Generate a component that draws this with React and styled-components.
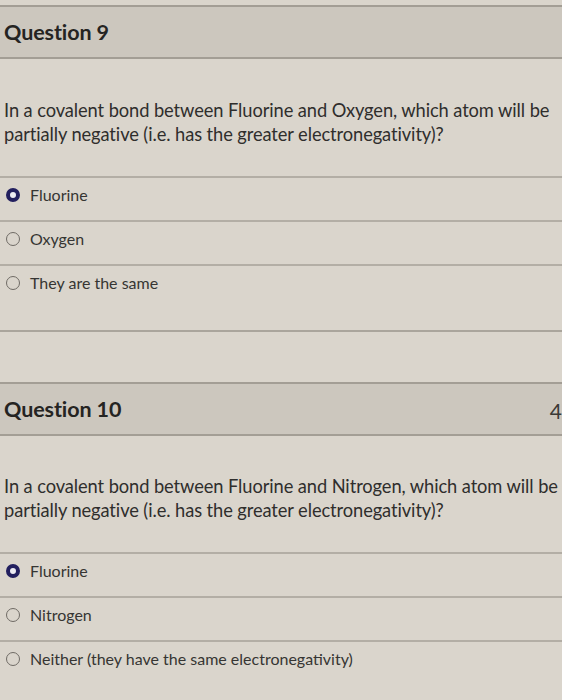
import React from "react";
import styled, { createGlobalStyle } from "styled-components";

const Global = createGlobalStyle`
  html, body {
    margin: 0;
    padding: 0;
    background: #dad5cc;
    overflow: hidden;
  }
  body {
    font-family: Lato, "Open Sans", "Liberation Sans", sans-serif;
    color: #2e2d2b;
  }
`;

const Page = styled.div`
  width: 562px;
  padding-top: 5px;
  display: flex;
  flex-direction: column;
  gap: 50px;
`;

const Question = styled.section`
  display: flex;
  flex-direction: column;
  border-bottom: 2px solid #aaa59c;
`;

const Header = styled.header`
  height: 50px;
  display: flex;
  align-items: center;
  justify-content: space-between;
  padding: 0 0 0 4px;
  background: #ccc7be;
  border-top: 2px solid #a39e95;
  border-bottom: 2px solid #a39e95;
`;

const Title = styled.h2`
  margin: 0;
  font-size: 21.5px;
  font-weight: 700;
  color: #252422;
  letter-spacing: -0.1px;
`;

const Points = styled.span`
  font-size: 21px;
  color: #3a3936;
  margin-top: 3px;
`;

const Text = styled.p`
  margin: 0;
  padding: ${(p) => p.$top}px 0 30px 4px;
  font-size: 18.3px;
  letter-spacing: -0.09px;
  line-height: 24px;
  color: #2f2e2c;
`;

const Answers = styled.ul`
  list-style: none;
  margin: 0;
  padding: 0 0 22px 0;
  display: flex;
  flex-direction: column;
`;

const Answer = styled.li`
  display: flex;
  align-items: center;
  gap: 10px;
  padding: 8px 0 16px 6px;
  line-height: 18px;
  font-size: 16px;
  color: #363533;
  border-top: 2px solid #b3aea5;
`;

const Radio = styled.span`
  box-sizing: border-box;
  flex: none;
  width: 14px;
  height: 14px;
  border-radius: 50%;
  border: ${(p) => (p.$checked ? "4.5px solid #221f5e" : "1.5px solid #6f6b65")};
  background: ${(p) => (p.$checked ? "#ecebf2" : "transparent")};
`;

const data = [
  {
    title: "Question 9",
    points: "",
    top: 39,
    text: "In a covalent bond between Fluorine and Oxygen, which atom will be partially negative (i.e. has the greater electronegativity)?",
    answers: ["Fluorine", "Oxygen", "They are the same"],
    checked: 0,
  },
  {
    title: "Question 10",
    points: "4",
    top: 38,
    text: "In a covalent bond between Fluorine and Nitrogen, which atom will be partially negative (i.e. has the greater electronegativity)?",
    answers: ["Fluorine", "Nitrogen", "Neither (they have the same electronegativity)"],
    checked: 0,
  },
];

export default function App() {
  return (
    <>
      <Global />
      <Page>
        {data.map((q) => (
          <Question key={q.title}>
            <Header>
              <Title>{q.title}</Title>
              <Points>{q.points}</Points>
            </Header>
            <Text $top={q.top}>{q.text}</Text>
            <Answers>
              {q.answers.map((a, i) => (
                <Answer key={a}>
                  <Radio $checked={i === q.checked} />
                  {a}
                </Answer>
              ))}
            </Answers>
          </Question>
        ))}
      </Page>
    </>
  );
}
